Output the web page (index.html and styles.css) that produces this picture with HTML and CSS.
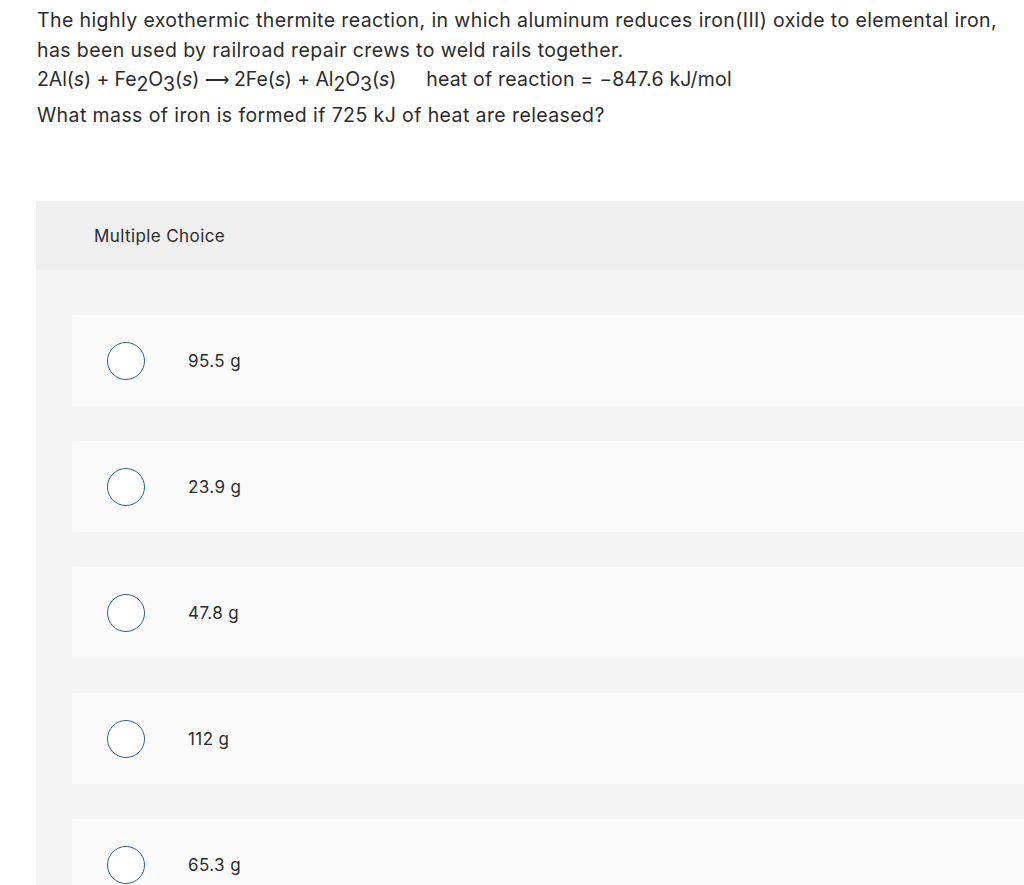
FILE: index.html
```html
<!DOCTYPE html>
<html>
<head>
<meta charset="utf-8">
<link rel="stylesheet" href="styles.css">
</head>
<body>
<div class="page">
  <div class="question">
    <p class="line">The highly exothermic thermite reaction, in which aluminum reduces iron(III) oxide to elemental iron,<br>has been used by railroad repair crews to weld rails together.</p>
    <p class="line eq">2Al(<i>s</i>) + Fe<sub>2</sub>O<sub>3</sub>(<i>s</i>) <span class="arrow">⟶</span> 2Fe(<i>s</i>) + Al<sub>2</sub>O<sub>3</sub>(<i>s</i>)<span class="heat">heat of reaction = −847.6 kJ/mol</span></p>
    <p class="line ask">What mass of iron is formed if 725 kJ of heat are released?</p>
  </div>
  <div class="card">
    <div class="card-head">Multiple Choice</div>
    <div class="card-body">
      <div class="option"><span class="radio"></span><span class="label">95.5 g</span></div>
      <div class="option"><span class="radio"></span><span class="label">23.9 g</span></div>
      <div class="option"><span class="radio"></span><span class="label">47.8 g</span></div>
      <div class="option"><span class="radio"></span><span class="label">112 g</span></div>
      <div class="option"><span class="radio"></span><span class="label">65.3 g</span></div>
    </div>
  </div>
</div>
</body>
</html>
```
FILE: styles.css
```css
html, body {
  margin: 0;
  padding: 0;
  overflow: hidden;
  background: #ffffff;
}
body {
  font-family: Inter, "Open Sans", "Liberation Sans", sans-serif;
  color: #2b2b2b;
}
.page {
  padding: 6px 0 0 37px;
}
.question {
  width: 987px;
}
.line {
  margin: 0;
  font-size: 19.5px;
  letter-spacing: 0.4px;
  line-height: 29.5px;
  white-space: nowrap;
}
.eq {
  letter-spacing: -0.1px;
}
.eq sub {
  font-size: 1em;
  vertical-align: -5px;
  line-height: 0;
}
.arrow {
  font-family: "DejaVu Sans", sans-serif;
  font-weight: 300;
  font-size: 17px;
}
.heat {
  margin-left: 30px;
  letter-spacing: 0.2px;
}
.ask {
  margin-top: 5px;
}
.card {
  margin: 71px 0 0 -1px;
  width: 1020px;
  background: #f4f4f4;
  border-radius: 3px 0 0 0;
}
.card-head {
  background: #efefef;
  height: 69px;
  display: flex;
  align-items: center;
  padding-left: 58px;
  font-size: 17px;
  letter-spacing: 0.4px;
  color: #2b2b2b;
  border-radius: 3px 0 0 0;
}
.card-body {
  padding: 45px 0 0 36px;
  display: flex;
  flex-direction: column;
  gap: 35px;
}
.option {
  height: 91px;
  background: #fafafa;
  border-radius: 3px 0 0 3px;
  display: flex;
  align-items: center;
  padding-left: 35px;
}
.radio {
  width: 36px;
  height: 36px;
  border: 1.5px solid #2c6093;
  border-radius: 50%;
  background: #ffffff;
  flex: none;
}
.label {
  margin-left: 43px;
  font-size: 17px;
  letter-spacing: 0.4px;
  color: #2b2b2b;
}
```
